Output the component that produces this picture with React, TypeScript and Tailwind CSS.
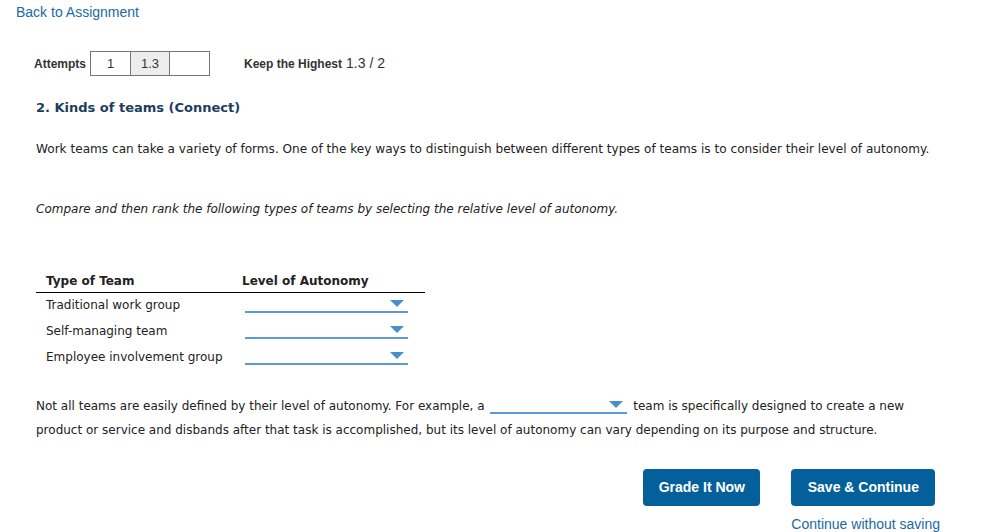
import React from "react";

const body = { fontFamily: '"DejaVu Sans", Verdana, sans-serif' };
const arial = { fontFamily: '"Liberation Sans", Arial, sans-serif' };

function Select({ className = "" }: { className?: string }) {
  return (
    <span className={`relative inline-block h-[17px] border-b-2 border-[#5b9bd1] align-middle ${className}`}>
      <svg className="absolute right-[4px] top-[4px]" width="14" height="7" viewBox="0 0 14 7">
        <polygon points="0,0 14,0 7,7" fill="#4a8fca" />
      </svg>
    </span>
  );
}

const rows = ["Traditional work group", "Self-managing team", "Employee involvement group"];

export default function App() {
  return (
    <div className="w-[991px] h-[532px] bg-white text-[#222] overflow-hidden">
      <div className="pl-4 pt-[2px] text-[14px] text-[#1a6aa6]" style={arial}>
        <a href="#">Back to Assignment</a>
      </div>

      <div className="flex items-center pl-[34px] mt-[28px] text-[12px] text-[#333]" style={arial}>
        <span className="font-bold mr-[4px]">Attempts</span>
        <div className="flex h-[25px] border border-[#777]">
          <div className="w-[39px] flex items-center justify-center text-[13px]">1</div>
          <div className="w-[40px] flex items-center justify-center text-[13px] bg-[#ededed] border-x border-[#777]">1.3</div>
          <div className="w-[39px]" />
        </div>
        <span className="font-bold ml-[34px]">Keep the Highest</span>
        <span className="ml-[4px] text-[14px]">1.3 / 2</span>
      </div>

      <div className="pl-[36px] text-[12px]" style={body}>
        <h2 className="mt-[22px] font-bold text-[13px] text-[#1c3d5e]">2. Kinds of teams (Connect)</h2>
        <p className="mt-[22px] text-[12.1px]">
          Work teams can take a variety of forms. One of the key ways to distinguish between different types of teams is to consider their level of autonomy.
        </p>
        <p className="mt-[42px] italic">
          Compare and then rank the following types of teams by selecting the relative level of autonomy.
        </p>

        <table className="mt-[54px] w-[389px] border-collapse text-[12px]">
          <thead>
            <tr className="border-b border-black">
              <th className="text-left font-bold pl-[10px] pb-[2px] w-[206px]">Type of Team</th>
              <th className="text-left font-bold pb-[2px]">Level of Autonomy</th>
            </tr>
          </thead>
          <tbody>
            {rows.map((r) => (
              <tr key={r} className="h-[26px]">
                <td className="pl-[10px]">{r}</td>
                <td className="pl-[3px]">
                  <Select className="w-[163px] -mt-[2px]" />
                </td>
              </tr>
            ))}
          </tbody>
        </table>

        <p className="mt-[24px] leading-[24px] w-[880px]">
          Not all teams are easily defined by their level of autonomy. For example, a{" "}
          <Select className="w-[137px] mx-[2px] -mt-[3px]" /> team is specifically designed to create a new product or service and disbands after that task is accomplished, but its level of autonomy can vary depending on its purpose and structure.
        </p>
      </div>

      <div className="flex justify-end pr-[51px] mt-[27px] gap-[31px]" style={arial}>
        <button className="w-[117px] h-[37px] rounded-[4px] bg-[#03609a] text-white font-bold text-[14px]">Grade It Now</button>
        <div className="flex flex-col items-start">
          <button className="w-[144px] h-[37px] rounded-[4px] bg-[#03609a] text-white font-bold text-[14px]">Save &amp; Continue</button>
          <a href="#" className="mt-[8px] text-[14px] text-[#1a6aa6]">Continue without saving</a>
        </div>
      </div>
    </div>
  );
}
